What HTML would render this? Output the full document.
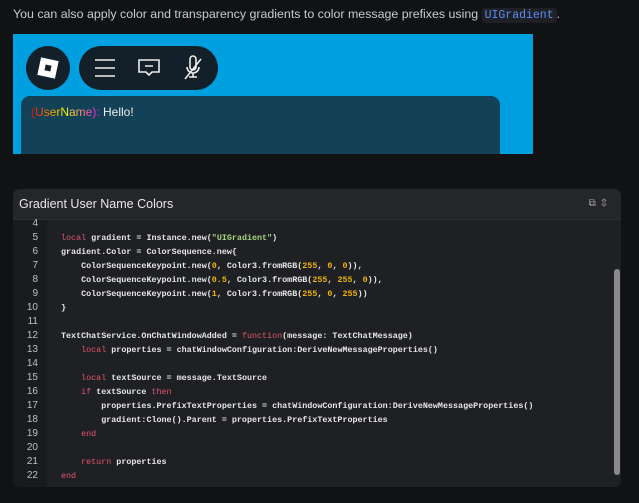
<!DOCTYPE html>
<html><head><style>
body{margin:0;width:639px;height:503px;background:#111214;font-family:"Liberation Sans",sans-serif;overflow:hidden;position:relative}
.p{position:absolute;left:13px;top:7px;font-size:12.4px;color:#c8cacd;white-space:nowrap}
.p code{font-family:"Liberation Mono",monospace;color:#5b8df5;background:#1e2026;padding:1px 3px;border-radius:3px;font-size:11.5px}
.blue{position:absolute;left:13px;top:34px;width:520px;height:120px;background:#009fe0;overflow:hidden}
.logo{position:absolute;left:13px;top:12px;width:44px;height:44px;border-radius:50%;background:#13202a}
.bar{position:absolute;left:66px;top:12px;width:139px;height:44px;border-radius:22px;background:#13202a}
.chat{position:absolute;left:8px;top:62px;width:479px;height:70px;border-radius:9px;background:#134156}
.msg{position:absolute;left:10px;top:9px;font-size:12px;color:#eee}
.card{position:absolute;left:13px;top:189px;width:608px;height:298px;border-radius:7px;background:#1f2023;overflow:hidden}
.hd{height:30px;background:#25262a;color:#e8e8e8;font-size:12.5px;line-height:30px;padding-left:6px;border-bottom:1px solid #2e2f33}
.gut{position:absolute;left:0;top:31px;width:34px;bottom:0;background:#1a1b1e}
.code{position:absolute;left:0;top:28px;font-family:"Liberation Mono",monospace;font-size:8.4px;line-height:14px;color:#e6e6e6;white-space:pre;font-weight:bold}
.n{display:inline-block;width:25px;text-align:right;color:#bfc0c3;margin-right:23px;font-weight:normal;font-family:"Liberation Sans",sans-serif;font-size:10px}
.k{color:#e0566f;font-weight:normal}.s{color:#a5d67d}.y{color:#f0b400}
.sb{position:absolute;left:601px;top:80px;width:6px;height:206px;background:#8a8a8c;border-radius:3px}
</style></head><body>
<div class="p">You can also apply color and transparency gradients to color message prefixes using <code>UIGradient</code>.</div>
<div class="blue">
<div class="logo"><div style="position:absolute;left:13px;top:13px;width:18px;height:18px;background:#fff;transform:rotate(12deg)"><div style="position:absolute;left:6px;top:6px;width:6px;height:6px;background:#13202a"></div></div></div>
<div class="bar">
<svg width="139" height="44" style="position:absolute;left:0;top:0" fill="none" stroke="#eee" stroke-width="1.6">
<path d="M16 14h20M16 22h20M16 30h20"/>
<path d="M60 14h20v12h-7l-3 3l-3-3h-7z M66 20h8"/>
<path d="M111 13a3 3 0 0 1 6 0v8a3 3 0 0 1-6 0z M108 21a6 6 0 0 0 12 0 M114 27v4 M110 31h8 M106 33l16-20"/>
</svg></div>
<div class="chat"><div class="msg"><span style="background:linear-gradient(90deg,#f00,#ff0 50%,#f0f);-webkit-background-clip:text;color:transparent">(UserName):</span> Hello!</div></div>
</div>
<div class="card">
<div class="hd">Gradient User Name Colors<span style="position:absolute;right:14px;top:0;color:#aaa;font-size:10px">⧉ &nbsp;⇕</span></div>
<div class="gut"></div>
<div class="code"><span class="n">4</span>
<span class="n">5</span><span class="k">local</span> gradient = Instance.new(<span class="s">"UIGradient"</span>)
<span class="n">6</span>gradient.Color = ColorSequence.new{
<span class="n">7</span>    ColorSequenceKeypoint.new(<span class="y">0</span>, Color3.fromRGB(<span class="y">255</span>, <span class="y">0</span>, <span class="y">0</span>)),
<span class="n">8</span>    ColorSequenceKeypoint.new(<span class="y">0.5</span>, Color3.fromRGB(<span class="y">255</span>, <span class="y">255</span>, <span class="y">0</span>)),
<span class="n">9</span>    ColorSequenceKeypoint.new(<span class="y">1</span>, Color3.fromRGB(<span class="y">255</span>, <span class="y">0</span>, <span class="y">255</span>))
<span class="n">10</span>}
<span class="n">11</span>
<span class="n">12</span>TextChatService.OnChatWindowAdded = <span class="k">function</span>(message: TextChatMessage)
<span class="n">13</span>    <span class="k">local</span> properties = chatWindowConfiguration:DeriveNewMessageProperties()
<span class="n">14</span>
<span class="n">15</span>    <span class="k">local</span> textSource = message.TextSource
<span class="n">16</span>    <span class="k">if</span> textSource <span class="k">then</span>
<span class="n">17</span>        properties.PrefixTextProperties = chatWindowConfiguration:DeriveNewMessageProperties()
<span class="n">18</span>        gradient:Clone().Parent = properties.PrefixTextProperties
<span class="n">19</span>    <span class="k">end</span>
<span class="n">20</span>
<span class="n">21</span>    <span class="k">return</span> properties
<span class="n">22</span><span class="k">end</span></div>
<div class="sb"></div>
</div>
</body></html>
